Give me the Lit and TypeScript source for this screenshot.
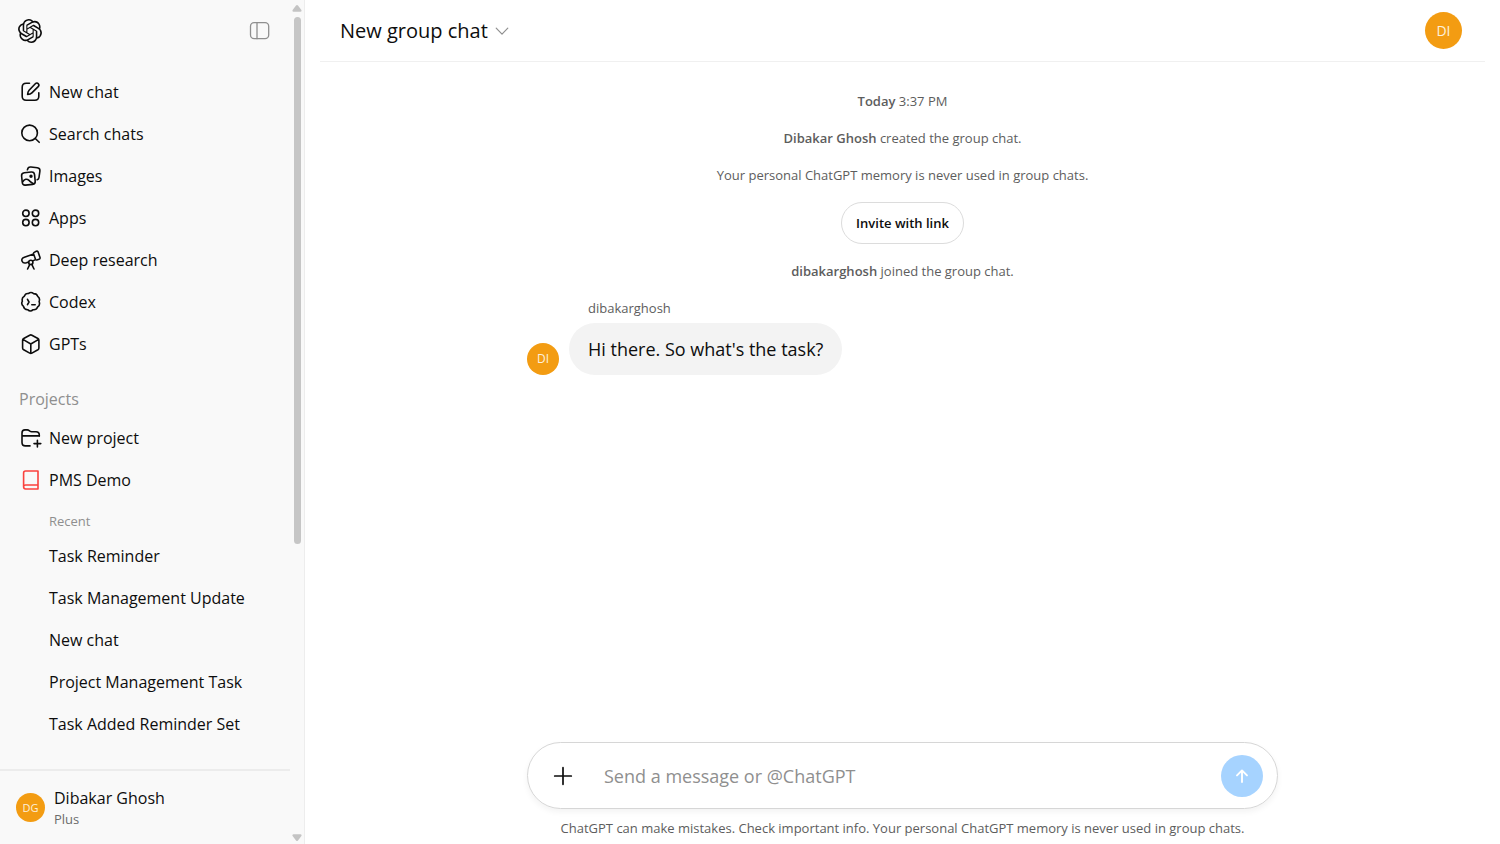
import { LitElement, html, css, svg } from "lit";
import { customElement, property } from "lit/decorators.js";

const icons: Record<string, unknown> = {
  compose: svg`<path d="M9.5 2.3H6.2Q2.2 2.3 2.2 6.3v9Q2.2 19.3 6.2 19.3h8.6Q18.8 19.3 18.8 15.3v-3.6"/><path d="M15.3 2.7c1-1 2.3-.8 3 0s.8 2-.1 2.9l-6.3 6.3c-1.200 1.200-3 1.500-4.300 1.600.1-1.300.400-3.100 1.500-4.300z"/>`,
  search: svg`<circle cx="9.600" cy="9.900" r="7.800"/><path d="M15.300 15.500 19.200 19.300"/>`,
  images: svg`<rect x="1.900" y="7.300" width="13" height="12.500" rx="3" transform="rotate(-6 8.400 13.500)"/><path d="M7.400 4.800C7.900 2.300 8.900 1.700 11 2l6.300.8c2 .3 2.900 1.400 2.600 3.400l-.9 6.300c-.2 1.400-.8 2-1.800 2.300"/><path d="M2.700 16.800c1.700-3 4.300-3.300 6.300-1.400 1.900 1.900 2.500 2.800 4.800 3.300"/><circle cx="11" cy="11.200" r=".9" fill="currentColor"/>`,
  apps: svg`<circle cx="5.900" cy="6.300" r="3.200"/><circle cx="15.500" cy="6.300" r="3.200"/><circle cx="5.900" cy="15.600" r="3.200"/><circle cx="15.500" cy="15.600" r="3.200"/>`,
  research: svg`<path d="M14.200 3.400 16.300 2.300Q17.700 1.700 18.200 3.200L20 8.400Q20.400 9.900 19 10.300L16.800 10.900Q15.900 11.100 15.500 10.200L13.600 5Q13.300 3.900 14.200 3.400zM13.600 5 4.400 8.300Q1 9.600 2.100 12.200T6.500 13.700L8.600 12.900M12.800 11.900 15.500 10.600"/><circle cx="10.800" cy="13.400" r="2.100"/><path d="M9.800 15.400 7.600 20M11.800 15.400 14 20"/>`,
  codex: svg`<path d="M8.500 2.500C10.200 1.200 12 1.300 13.600 2.600 15.700 2.600 17.100 3.300 17.700 5.400 19.600 6.800 20 8.500 19.100 10.500 20 12.900 19.700 14.700 17.600 16 16.700 18.200 15.200 19 13.200 18.700 11.200 20.500 9.300 20.300 7.600 18.700 5.200 18.500 3.900 17.500 3.500 15.300 1.600 13.800 1.300 12 2.400 10.200 1.700 7.900 2.400 6.300 4.300 5.300 5 3.200 6.500 2.200 8.500 2.500Z"/><path d="M7.500 8.300 9 11 7.500 13.700M11.800 13.700h3.400"/>`,
  cube: svg`<path d="M9.700 2.200Q10.800 1.600 11.900 2.200L17.900 5.500Q18.900 6.100 18.900 7.300v7.600Q18.900 16.100 17.900 16.700l-6 3.400Q10.800 20.700 9.700 20.100L3.700 16.700Q2.600 16.100 2.600 14.900V7.300Q2.600 6.100 3.700 5.500zM2.900 6.400 10.800 11l7.900-4.600M10.800 11v9.200"/>`,
  folder: svg`<path d="M10 18.900H5.300Q2 18.900 2 15.600V5.900Q2 2.900 5 2.900h2.200Q8.400 2.900 9.200 3.600l.7.600Q10.600 4.700 11.600 4.700H16Q19.300 4.700 19.300 8v1.200M2 8.900h17.300M17.400 13.200v6.800M14 16.600h6.800"/>`,
  book: svg`<path d="M5.600 2H18v18H5.600Q3.600 20 3.600 17.800V4Q3.600 2 5.600 2zM3.600 17.800Q3.600 16 5.600 16H18"/>`,
  panel: svg`<rect x="1.500" y="2.700" width="18.200" height="16" rx="3.600"/><path d="M8 2.700v16"/>`,
  chevron: svg`<path d="M5.200 8.200 11 14.200 16.800 8.200"/>`,
  plus: svg`<path d="M11 2.700v16.600M2.700 11h16.600"/>`,
  arrow: svg`<path d="M11 17V5.600M6 10.400l5-5 5 5"/>`,
};

@customElement("ui-icon")
export class UiIcon extends LitElement {
  @property() name = "";
  static styles = css`
    :host { display: block; width: 22px; height: 22px; flex: none; }
    svg { display: block; fill: none; stroke: currentColor; stroke-width: var(--stroke, 1.600); stroke-linecap: round; stroke-linejoin: round; }
  `;
  render() {
    return html`<svg width="22" height="22" viewBox="0 0 22 22" aria-hidden="true">${icons[this.name]}</svg>`;
  }
}

const NAV = [
  ["compose", "New chat"],
  ["search", "Search chats"],
  ["images", "Images"],
  ["apps", "Apps"],
  ["research", "Deep research"],
  ["codex", "Codex"],
  ["cube", "GPTs"],
];
const RECENT = ["Task Reminder", "Task Management Update", "New chat", "Project Management Task", "Task Added Reminder Set"];

@customElement("chat-sidebar")
export class ChatSidebar extends LitElement {
  static styles = css`
    :host { display: grid; grid-template-columns: 1fr 14px; width: 304px; flex: none; height: 100vh; background: #f9f9f9; border-right: 1px solid #ededed; color: #0d0d0d; }
    button { font: inherit; color: inherit; background: none; border: 0; padding: 0; display: flex; }
    a { color: inherit; text-decoration: none; }
    ul { list-style: none; margin: 0; padding: 0; }
    h2, h3 { margin: 0; font-weight: 400; color: #8f8f8f; }
    .column { display: flex; flex-direction: column; min-height: 0; min-width: 0; }
    .top { display: flex; justify-content: space-between; align-items: center; height: 61px; padding: 0 19px 0 18px; flex: none; }
    .logo { display: block; fill: #0d0d0d; }
    .toggle { color: #8f8f8f; --stroke: 1.300; }
    .scroll { flex: 1; min-height: 0; overflow: hidden; padding-top: 10px; }
    .row { display: flex; align-items: center; gap: 7px; height: 42px; padding-left: 20px; font-size: 16px; line-height: 22px; white-space: nowrap; }
    .child { padding-left: 49px; }
    .book { color: #fa423e; }
    h2 { font-size: 16px; line-height: 22px; padding: 23px 0 7px 19px; }
    h3 { font-size: 13px; line-height: 20px; padding: 10px 0 4px 49px; }
    .account { display: flex; align-items: center; gap: 9px; height: 75px; padding: 0 16px; border-top: 2px solid #ececec; text-align: left; flex: none; }
    .avatar { display: grid; place-items: center; width: 29px; height: 29px; border-radius: 50%; background: #f39c12; color: #fdf0dc; font-size: 11px; }
    .who { display: grid; font-size: 16px; line-height: 22px; }
    .plan { font-size: 13px; line-height: 20px; color: #6b6b6b; }
    .bar { display: flex; flex-direction: column; align-items: center; justify-content: space-between; padding: 5px 0 3px; }
    .thumb { width: 7px; height: 63%; margin: 5px 0 auto; border-radius: 4px; background: #c6c6c6; }
    .tip { fill: #c4c4c4; display: block; }
  `;
  render() {
    return html`
      <div class="column">
        <div class="top">
          <a href="#" aria-label="Home">
            <svg class="logo" width="24" height="24" viewBox="0 0 24 24"><path d="M22.2819 9.8211a5.9847 5.9847 0 0 0-.5157-4.9108 6.0462 6.0462 0 0 0-6.5098-2.9A6.0651 6.0651 0 0 0 4.9807 4.1818a5.9847 5.9847 0 0 0-3.9977 2.9 6.0462 6.0462 0 0 0 .7427 7.0966 5.98 5.98 0 0 0 .511 4.9107 6.051 6.051 0 0 0 6.5146 2.9001A5.9847 5.9847 0 0 0 13.2599 24a6.0557 6.0557 0 0 0 5.7718-4.2058 5.9894 5.9894 0 0 0 3.9977-2.9001 6.0557 6.0557 0 0 0-.7475-7.0729zm-9.022 12.6081a4.4755 4.4755 0 0 1-2.8764-1.0408l.1419-.0804 4.7783-2.7582a.7948.7948 0 0 0 .3927-.6813v-6.7369l2.02 1.1686a.071.071 0 0 1 .038.052v5.5826a4.504 4.504 0 0 1-4.4945 4.4944zm-9.6607-4.1254a4.4708 4.4708 0 0 1-.5346-3.0137l.142.0852 4.783 2.7582a.7712.7712 0 0 0 .7806 0l5.8428-3.3685v2.3324a.0804.0804 0 0 1-.0332.0615L9.74 19.9502a4.4992 4.4992 0 0 1-6.1408-1.6464zM2.3408 7.8956a4.485 4.485 0 0 1 2.3655-1.9728V11.6a.7664.7664 0 0 0 .3879.6765l5.8144 3.3543-2.0201 1.1685a.0757.0757 0 0 1-.071 0l-4.8303-2.7865A4.504 4.504 0 0 1 2.3408 7.872zm16.5963 3.8558L13.1038 8.364 15.1192 7.2a.0757.0757 0 0 1 .071 0l4.8303 2.7913a4.4944 4.4944 0 0 1-.6765 8.1042v-5.6772a.79.79 0 0 0-.407-.667zm2.0107-3.0231l-.142-.0852-4.7735-2.7818a.7759.7759 0 0 0-.7854 0L9.409 9.2297V6.8974a.0662.0662 0 0 1 .0284-.0615l4.8303-2.7866a4.4992 4.4992 0 0 1 6.6802 4.66zM8.3065 12.863l-2.02-1.1638a.0804.0804 0 0 1-.038-.0567V6.0742a4.4992 4.4992 0 0 1 7.3757-3.4537l-.142.0805L8.704 5.459a.7948.7948 0 0 0-.3927.6813zm1.0976-2.3654l2.602-1.4998 2.6069 1.4998v2.9994l-2.5974 1.4997-2.6067-1.4997Z"/></svg>
          </a>
          <button class="toggle" aria-label="Close sidebar"><ui-icon name="panel"></ui-icon></button>
        </div>
        <nav class="scroll">
          <ul>${NAV.map(([icon, label]) => html`<li><a class="row" href="#"><ui-icon name=${icon}></ui-icon>${label}</a></li>`)}</ul>
          <h2>Projects</h2>
          <ul>
            <li><a class="row" href="#"><ui-icon name="folder"></ui-icon>New project</a></li>
            <li><a class="row" href="#"><ui-icon class="book" name="book"></ui-icon>PMS Demo</a></li>
          </ul>
          <h3>Recent</h3>
          <ul>${RECENT.map((label) => html`<li><a class="row child" href="#">${label}</a></li>`)}</ul>
        </nav>
        <button class="account">
          <span class="avatar">DG</span>
          <span class="who">Dibakar Ghosh<span class="plan">Plus</span></span>
        </button>
      </div>
      <div class="bar" aria-hidden="true">
        <svg class="tip" width="10" height="7" viewBox="0 0 10 7"><path d="M4 .6Q5-.4 6 .6L9.400 5Q10 6.800 8.400 6.800H1.600Q0 6.800.6 5z"/></svg>
        <div class="thumb"></div>
        <svg class="tip" width="10" height="7" viewBox="0 0 10 7"><path d="M4 6.400Q5 7.400 6 6.400L9.400 2Q10 .2 8.400.2H1.600Q0 .2.600 2z"/></svg>
      </div>
    `;
  }
}

@customElement("app-root")
export class AppRoot extends LitElement {
  static styles = css`
    :host { display: flex; height: 100vh; overflow: hidden; background: #fff; color: #0d0d0d; font-family: "Open Sans", "Noto Sans", sans-serif; }
    button { font: inherit; color: inherit; background: none; border: 0; padding: 0; }
    main { flex: 1; min-width: 0; display: flex; flex-direction: column; padding: 0 15px; }
    header { display: flex; align-items: center; justify-content: space-between; height: 61px; padding: 0 23px 0 20px; border-bottom: 1px solid #f0f0f0; flex: none; }
    h1 { margin: 0; font-size: 20px; line-height: 28px; font-weight: 400; }
    .title { display: flex; align-items: center; gap: 3px; }
    .chev { color: #8f8f8f; --stroke: 1.200; }
    .avatar { display: grid; place-items: center; border-radius: 50%; background: #f39c12; color: #fdf0dc; flex: none; }
    .large { width: 37px; height: 37px; font-size: 14px; }
    .small { width: 32px; height: 32px; font-size: 12px; }
    .thread { flex: 1; min-height: 0; width: 100%; max-width: 751px; margin: 0 auto; padding-top: 29px; display: flex; flex-direction: column; align-items: center; gap: 17px; box-sizing: border-box; font-size: 13px; line-height: 20px; color: #5d5d5d; }
    p { margin: 0; }
    b { font-weight: 600; }
    .invite { height: 42px; padding: 0 14px; border: 1px solid #dcdcdc; border-radius: 21px; color: #0d0d0d; font-weight: 600; }
    .message { align-self: stretch; display: grid; grid-template-columns: 32px auto; justify-content: start; column-gap: 10px; row-gap: 5px; align-items: end; }
    .name { grid-column: 2; padding-left: 19px; }
    .bubble { background: #f3f3f3; color: #0d0d0d; border-radius: 26px; padding: 12px 19px; font-size: 18px; line-height: 28px; }
    .composer { width: 100%; max-width: 751px; height: 67px; margin: 0 auto; box-sizing: border-box; display: flex; align-items: center; gap: 30px; padding: 0 14px 0 24px; border: 1px solid #d6d6d6; border-radius: 34px; box-shadow: 0 3px 6px rgba(0, 0, 0, 0.05); flex: none; }
    .add { --stroke: 1.700; }
    input { flex: 1; min-width: 0; border: 0; outline: 0; padding: 0; background: none; color: inherit; font: inherit; font-size: 18px; line-height: 28px; }
    input::placeholder { color: #8f8f8f; opacity: 1; }
    .send { display: grid; place-items: center; width: 42px; height: 42px; border-radius: 50%; background: #a6d3ff; color: #fff; --stroke: 1.900; }
    .note { text-align: center; font-size: 13px; line-height: 20px; padding: 9px 0 6px; color: #5d5d5d; }
  `;
  render() {
    return html`
      <chat-sidebar></chat-sidebar>
      <main>
        <header>
          <h1><button class="title">New group chat <ui-icon class="chev" name="chevron"></ui-icon></button></h1>
          <button class="avatar large" aria-label="Members">DI</button>
        </header>
        <section class="thread">
          <p><b>Today</b> 3:37 PM</p>
          <p><b>Dibakar Ghosh</b> created the group chat.</p>
          <p>Your personal ChatGPT memory is never used in group chats.</p>
          <button class="invite">Invite with link</button>
          <p><b>dibakarghosh</b> joined the group chat.</p>
          <div class="message">
            <span class="name">dibakarghosh</span>
            <span class="avatar small">DI</span>
            <span class="bubble">Hi there. So what's the task?</span>
          </div>
        </section>
        <form class="composer" @submit=${(e: Event) => e.preventDefault()}>
          <button class="add" type="button" aria-label="Add files"><ui-icon name="plus"></ui-icon></button>
          <input type="text" aria-label="Message" placeholder="Send a message or @ChatGPT" />
          <button class="send" type="submit" aria-label="Send"><ui-icon name="arrow"></ui-icon></button>
        </form>
        <p class="note">ChatGPT can make mistakes. Check important info. Your personal ChatGPT memory is never used in group chats.</p>
      </main>
    `;
  }
}
